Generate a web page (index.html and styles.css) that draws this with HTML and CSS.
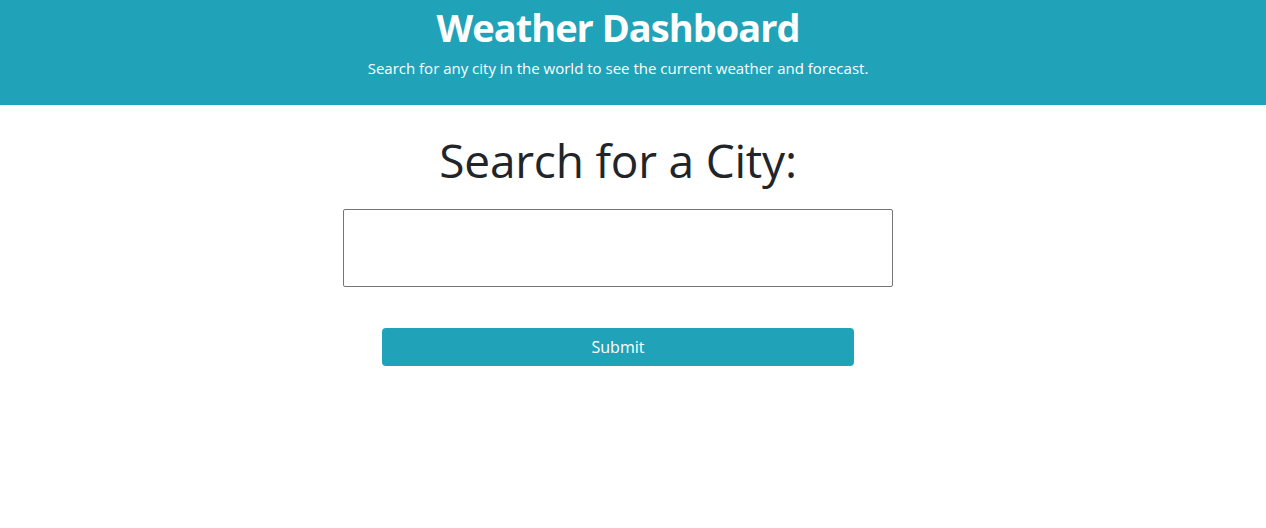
FILE: index.html
```html
<!DOCTYPE html>
<html>
<head>
<meta charset="utf-8">
<link rel="stylesheet" href="styles.css">
</head>
<body>
<header class="hero">
  <div class="inner">
    <h1 class="title">Weather Dashboard</h1>
    <p class="lead">Search for any city in the world to see the current weather and forecast.</p>
  </div>
</header>
<main class="page">
  <h2 class="search-title">Search for a City:</h2>
  <input class="city-input" type="text">
  <button class="submit">Submit</button>
</main>
</body>
</html>
```
FILE: styles.css
```css
html, body {
  margin: 0;
  padding: 0;
  background: #fff;
  font-family: "Open Sans", "Noto Sans", sans-serif;
  color: #212529;
}
.hero {
  background: #20a3b9;
  height: 105px;
  box-sizing: border-box;
}
.inner {
  width: 1236px;
  display: flex;
  flex-direction: column;
  align-items: center;
}
.title {
  margin: 3px 0 0;
  font-size: 38px;
  font-weight: 700;
  letter-spacing: -1px;
  line-height: 48px;
  color: #fff;
}
.lead {
  margin: 7px 0 0;
  font-size: 15px;
  line-height: 20px;
  color: #fff;
}
.page {
  width: 1236px;
  display: flex;
  flex-direction: column;
  align-items: center;
}
.search-title {
  margin: 25px 0 0;
  font-size: 46px;
  font-weight: 400;
  letter-spacing: -0.2px;
  line-height: 60px;
}
.city-input {
  margin-top: 19px;
  width: 550px;
  height: 78px;
  box-sizing: border-box;
  border: 1px solid #767676;
  border-radius: 2px;
  padding: 0;
}
.submit {
  margin-top: 41px;
  width: 472px;
  height: 38px;
  border: none;
  border-radius: 4px;
  background: #20a3b9;
  color: #fff;
  font-family: inherit;
  font-size: 16px;
}
```
